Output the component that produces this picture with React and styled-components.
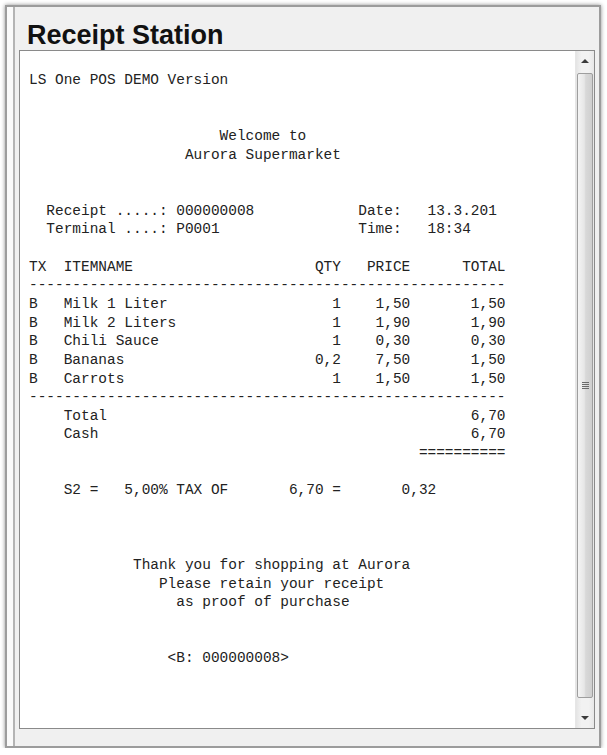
import React from 'react';
import styled, { createGlobalStyle } from 'styled-components';

const GlobalStyle = createGlobalStyle`
  html, body {
    margin: 0;
    padding: 0;
    background: #ffffff;
  }
`;

const W = 55;

const pad = (n) => ' '.repeat(n);

const items = [
  { name: 'Milk 1 Liter', qty: '1', price: '1,50', total: '1,50' },
  { name: 'Milk 2 Liters', qty: '1', price: '1,90', total: '1,90' },
  { name: 'Chili Sauce', qty: '1', price: '0,30', total: '0,30' },
  { name: 'Bananas', qty: '0,2', price: '7,50', total: '1,50' },
  { name: 'Carrots', qty: '1', price: '1,50', total: '1,50' },
];

const itemRow = (it) =>
  ('B   ' + it.name).padEnd(33) +
  it.qty.padStart(3) +
  it.price.padStart(8) +
  it.total.padStart(11);

const receiptLines = [
  'LS One POS DEMO Version',
  '',
  '',
  pad(22) + 'Welcome to',
  pad(18) + 'Aurora Supermarket',
  '',
  '',
  '  Receipt .....: 000000008'.padEnd(38) + 'Date:'.padEnd(8) + '13.3.201',
  '  Terminal ....: P0001'.padEnd(38) + 'Time:'.padEnd(8) + '18:34',
  '',
  'TX  ITEMNAME'.padEnd(33) + 'QTY' + pad(3) + 'PRICE' + 'TOTAL'.padStart(11),
  '-'.repeat(W),
  ...items.map(itemRow),
  '-'.repeat(W),
  '    Total'.padEnd(51) + '6,70',
  '    Cash'.padEnd(51) + '6,70',
  pad(45) + '='.repeat(10),
  '',
  '    S2 =   5,00% TAX OF       6,70 =       0,32',
  '',
  '',
  '',
  pad(12) + 'Thank you for shopping at Aurora',
  pad(15) + 'Please retain your receipt',
  pad(17) + 'as proof of purchase',
  '',
  '',
  pad(16) + '<B: 000000008>',
];

const Window = styled.div`
  box-sizing: border-box;
  margin: 5px 0 0 5px;
  width: 596px;
  height: 743px;
  border: 2px solid #9c9c9c;
  box-shadow: 0 0 4px rgba(0, 0, 0, 0.45);
  background: #f0f0f0;
  display: flex;
`;

const LeftStrip = styled.div`
  width: 6px;
  background: #fafafa;
  border-right: 2px solid #b4b4b4;
  flex: none;
`;

const Content = styled.div`
  flex: 1;
  display: flex;
  flex-direction: column;
  min-width: 0;
`;

const Title = styled.h1`
  margin: 0;
  padding: 13px 0 0 12px;
  height: 30px;
  line-height: 30px;
  font-family: "Liberation Sans", Arial, sans-serif;
  font-size: 27px;
  font-weight: bold;
  color: #111111;
`;

const Panel = styled.div`
  flex: 1;
  margin: 0 4px 17px 4px;
  border: 1px solid #8a8a8a;
  background: #ffffff;
  display: flex;
  min-height: 0;
`;

const ReceiptText = styled.pre`
  flex: 1;
  margin: 0;
  padding: 20px 0 0 9px;
  font-family: "Liberation Mono", "Courier New", monospace;
  font-size: 14.45px;
  line-height: 18.65px;
  color: #222222;
  overflow: hidden;
`;

const ScrollBar = styled.div`
  width: 18px;
  flex: none;
  display: flex;
  flex-direction: column;
  background: linear-gradient(to right, #e4e4e4, #f2f2f2 30%, #f2f2f2 70%, #e8e8e8);
  border-left: 1px solid #e6e6e6;
`;

const ScrollButton = styled.div`
  height: 20px;
  flex: none;
  display: flex;
  align-items: center;
  justify-content: center;
`;

const Arrow = styled.span`
  width: 0;
  height: 0;
  border-left: 4px solid transparent;
  border-right: 4px solid transparent;
  ${(p) => (p.$down ? 'border-top: 4px solid #3c3c3c;' : 'border-bottom: 4px solid #3c3c3c;')}
`;

const Thumb = styled.div`
  flex: 1;
  margin: 2px 1px 10px 1px;
  border: 1px solid #9e9e9e;
  border-radius: 2px;
  background: linear-gradient(to right, #f4f4f4, #e6e6e6 45%, #d8d8d8 55%, #cfcfcf);
  display: flex;
  flex-direction: column;
  align-items: center;
  justify-content: center;
  gap: 1px;
`;

const Grip = styled.span`
  width: 7px;
  height: 1px;
  background: #6a6a6a;
`;

export default function App() {
  return (
    <>
      <GlobalStyle />
      <Window>
        <LeftStrip />
        <Content>
          <Title>Receipt Station</Title>
          <Panel>
            <ReceiptText>{receiptLines.join('\n')}</ReceiptText>
            <ScrollBar>
              <ScrollButton>
                <Arrow />
              </ScrollButton>
              <Thumb>
                <Grip />
                <Grip />
                <Grip />
                <Grip />
              </Thumb>
              <ScrollButton>
                <Arrow $down />
              </ScrollButton>
            </ScrollBar>
          </Panel>
        </Content>
      </Window>
    </>
  );
}
